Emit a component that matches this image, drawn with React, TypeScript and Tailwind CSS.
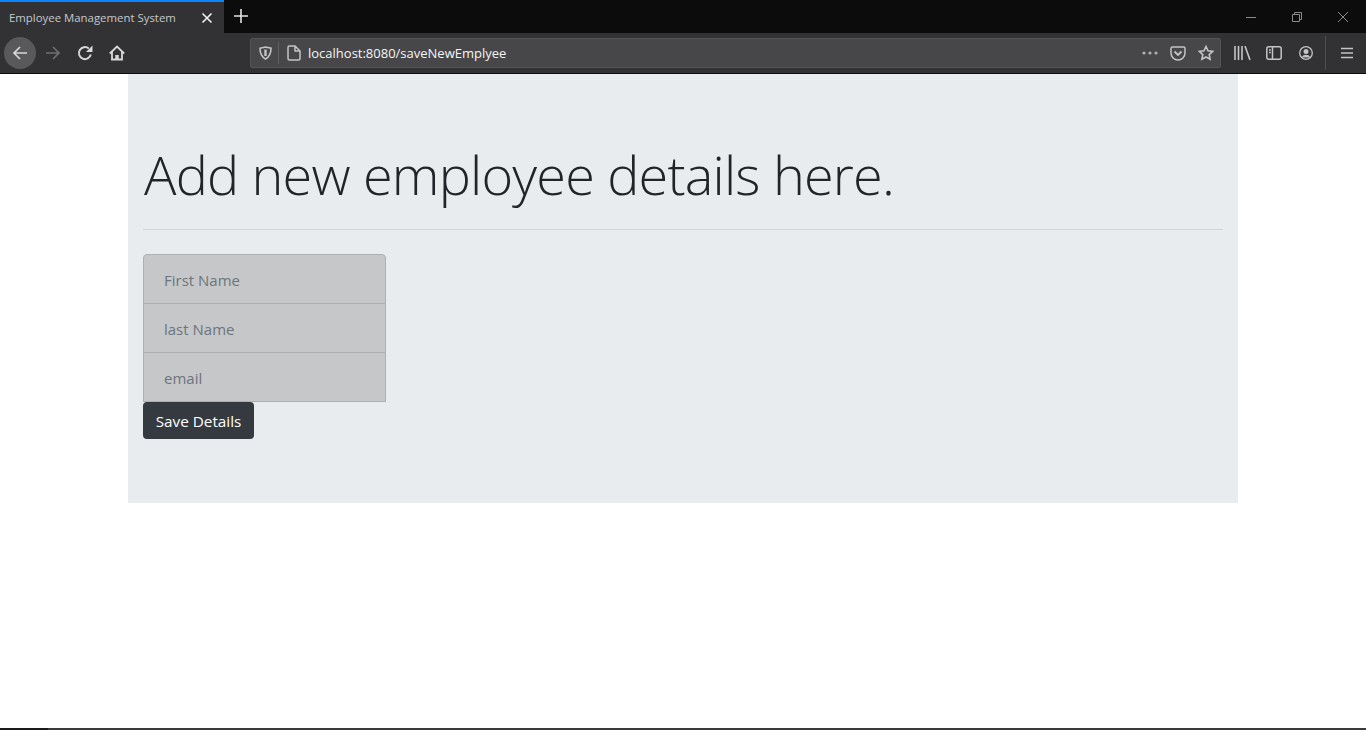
const sans = "font-['Open_Sans','Liberation_Sans',sans-serif]"

function BrowserChrome() {
  return (
    <header className={`flex h-[74px] flex-col border-b border-[#0c0c0d] ${sans}`}>
      <div className="flex h-[33px] bg-[#0c0c0d]">
        <div className="flex w-[224px] items-center justify-between border-t-2 border-[#0a84ff] bg-[#323234] pl-[9px] pr-[11px]">
          <span className="text-[11.4px] text-[#c4c8cc]">Employee Management System</span>
          <svg width="12" height="12" viewBox="0 0 12 12" fill="none" stroke="#f2f2f2" strokeWidth="1.6">
            <path d="M1.5 1.5l9 9M10.5 1.5l-9 9" />
          </svg>
        </div>
        <div className="flex w-[34px] items-center justify-center pb-[2px]">
          <svg width="14" height="14" viewBox="0 0 14 14" fill="none" stroke="#e4e4e4" strokeWidth="1.6">
            <path d="M7 0v14M0 7h14" />
          </svg>
        </div>
        <div className="ml-auto flex items-center">
          <div className="flex w-[46px] justify-center">
            <svg width="10" height="10" viewBox="0 0 10 10" stroke="#8a8a8a"><path d="M0 5.5h10" /></svg>
          </div>
          <div className="flex w-[46px] justify-center">
            <svg width="10" height="10" viewBox="0 0 10 10" fill="none" stroke="#8a8a8a">
              <path d="M.5 2.5h7v7h-7zM2.5 2.5v-2h7v7h-2" />
            </svg>
          </div>
          <div className="flex w-[46px] justify-center">
            <svg width="10" height="10" viewBox="0 0 10 10" stroke="#8a8a8a"><path d="M0 0l10 10M10 0L0 10" /></svg>
          </div>
        </div>
      </div>
      <div className="flex h-[40px] items-center bg-[#323234]">
        <div className="ml-[4px] flex h-[32px] w-[32px] items-center justify-center rounded-full bg-[#59595b]">
          <svg width="16" height="16" viewBox="0 0 16 16" fill="none" stroke="#d8d8d8" strokeWidth="1.7">
            <path d="M15 8H2M8 2L2 8l6 6" />
          </svg>
        </div>
        <div className="ml-[9px] flex w-[16px] justify-center">
          <svg width="16" height="16" viewBox="0 0 16 16" fill="none" stroke="#6f6f71" strokeWidth="1.7">
            <path d="M1 8h13M8 2l6 6-6 6" />
          </svg>
        </div>
        <div className="ml-[16px] flex w-[16px] justify-center">
          <svg width="16" height="16" viewBox="0 0 16 16" fill="none" stroke="#d8d8d8" strokeWidth="2">
            <path d="M13.8 9.5A6 6 0 1 1 11.800 3.500" />
            <path d="M15.500 .5v6.500H9z" fill="#d8d8d8" stroke="none" />
          </svg>
        </div>
        <div className="ml-[16px] flex w-[16px] justify-center">
          <svg width="16" height="16" viewBox="0 0 16 16" fill="none" stroke="#d8d8d8" strokeWidth="1.8">
            <path d="M.8 8.500L8 1.500l7.200 7M3 7v7.500h10V7" />
            <path d="M6.300 14.500V10h3.400v4.500" fill="#d8d8d8" stroke="none" />
          </svg>
        </div>
        <div className="ml-[125px] flex h-[30px] w-[971px] items-center rounded-[2px] border border-[#545456] bg-[#474749]">
          <div className="ml-[7px] flex w-[14px] justify-center">
            <svg width="13" height="14" viewBox="0 0 13 14" fill="none" stroke="#c4c4c4" strokeWidth="1.6">
              <path d="M1 2.2L6.5 1 12 2.2c0 5-1.5 8.5-5.5 10.8C2.500 10.700 1 7.200 1 2.200z" />
              <path d="M6.500 3.500v6.500" strokeWidth="2.400" />
            </svg>
          </div>
          <div className="ml-[6px] h-[22px] w-px bg-[#5e5e60]" />
          <svg className="ml-[8px]" width="14" height="16" viewBox="0 0 14 16" fill="none" stroke="#c4c4c4" strokeWidth="1.500">
            <path d="M1 2.500A1.500 1.500 0 0 1 2.500 1H8l5 5v7.500a1.500 1.500 0 0 1-1.500 1.500h-9A1.500 1.500 0 0 1 1 13.500zM8 1v5h5" />
          </svg>
          <span className="ml-[7px] pt-[2px] text-[13px] text-[#f4f4f5]">localhost:8080/saveNewEmplyee</span>
          <div className="ml-auto flex items-center">
            <svg width="16" height="4" viewBox="0 0 16 4" fill="#b1b1b3">
              <circle cx="2" cy="2" r="1.600" /><circle cx="8" cy="2" r="1.600" /><circle cx="14" cy="2" r="1.600" />
            </svg>
            <svg className="ml-[12px]" width="16" height="15" viewBox="0 0 16 15" fill="none" stroke="#c4c4c4" strokeWidth="1.500">
              <path d="M1 2.500A1.500 1.500 0 0 1 2.500 1h11A1.500 1.500 0 0 1 15 2.500V7A7 7 0 0 1 1 7z" />
              <path d="M4.500 5.500L8 9l3.500-3.500" strokeWidth="1.800" />
            </svg>
            <svg className="mx-[6px] ml-[12px]" width="16" height="16" viewBox="0 0 16 16" fill="none" stroke="#c4c4c4" strokeWidth="1.600">
              <path d="M8 1.500l2 4.300 4.700.6-3.500 3.200.9 4.700L8 12l-4.100 2.300.9-4.700L1.300 6.400 6 5.800z" />
            </svg>
          </div>
        </div>
        <svg className="ml-[13px]" width="17" height="14" viewBox="0 0 17 14" fill="none" stroke="#c4c4c4" strokeWidth="1.600">
          <path d="M1 0v14M4.500 0v14M8 0v14M11 0l5 14" />
        </svg>
        <svg className="ml-[15px]" width="16" height="14" viewBox="0 0 16 14" fill="none" stroke="#c4c4c4" strokeWidth="1.500">
          <rect x=".8" y=".8" width="14.400" height="12.400" rx="2" />
          <path d="M6.500 1v12M3 4h1.800M3 6.500h1.800" />
        </svg>
        <svg className="ml-[17px]" width="14" height="14" viewBox="0 0 14 14" fill="none" stroke="#c4c4c4" strokeWidth="1.300">
          <circle cx="7" cy="7" r="6.300" />
          <circle cx="7" cy="5.500" r="2.500" fill="#c4c4c4" stroke="none" />
          <path d="M2.800 11.500C3.500 9.500 5 8.800 7 8.800s3.500.7 4.200 2.700" fill="#c4c4c4" stroke="none" />
        </svg>
        <div className="ml-[12px] h-[34px] w-px bg-[#4e4e50]" />
        <svg className="ml-[15px]" width="12" height="12" viewBox="0 0 12 12" stroke="#c4c4c4" strokeWidth="1.600">
          <path d="M0 1.500h12M0 6h12M0 10.500h12" />
        </svg>
      </div>
    </header>
  )
}

function App() {
  return (
    <div className="flex h-[730px] flex-col overflow-hidden bg-white">
      <BrowserChrome />
      <main className={`mx-[128px] h-[429px] bg-[#e9ecef] px-[15px] pt-[62px] ${sans}`}>
        <h1 className="ml-px text-[54px] font-light leading-[76px] tracking-[-0.8px] text-[#212529]">Add new employee details here.</h1>
        <hr className="mt-[17px] border-[#d2d5d8]" />
        <form className="mt-[24px] w-[243px]">
          <div className="flex h-[50px] items-center rounded-t-[4px] border border-[#adafb1] bg-[#c6c7c9] pl-[20px] pt-[2px] text-[15px] text-[#6c757d]">First Name</div>
          <div className="-mt-px flex h-[50px] items-center border border-[#adafb1] bg-[#c6c7c9] pl-[20px] pt-[2px] text-[15px] text-[#6c757d]">last Name</div>
          <div className="-mt-px flex h-[50px] items-center border border-[#adafb1] bg-[#c6c7c9] pl-[20px] pt-[2px] text-[15px] text-[#6c757d]">email</div>
          <button type="button" className="flex h-[37px] w-[111px] items-center justify-center rounded-[4px] bg-[#343a40] pt-px text-[15.300px] text-white">Save Details</button>
        </form>
      </main>
      <div className="mt-auto flex h-[2px]">
        <div className="w-[48px] bg-[#1a1a1a]" />
        <div className="flex-1 bg-[#3a3a3a]" />
      </div>
    </div>
  )
}

export default App
